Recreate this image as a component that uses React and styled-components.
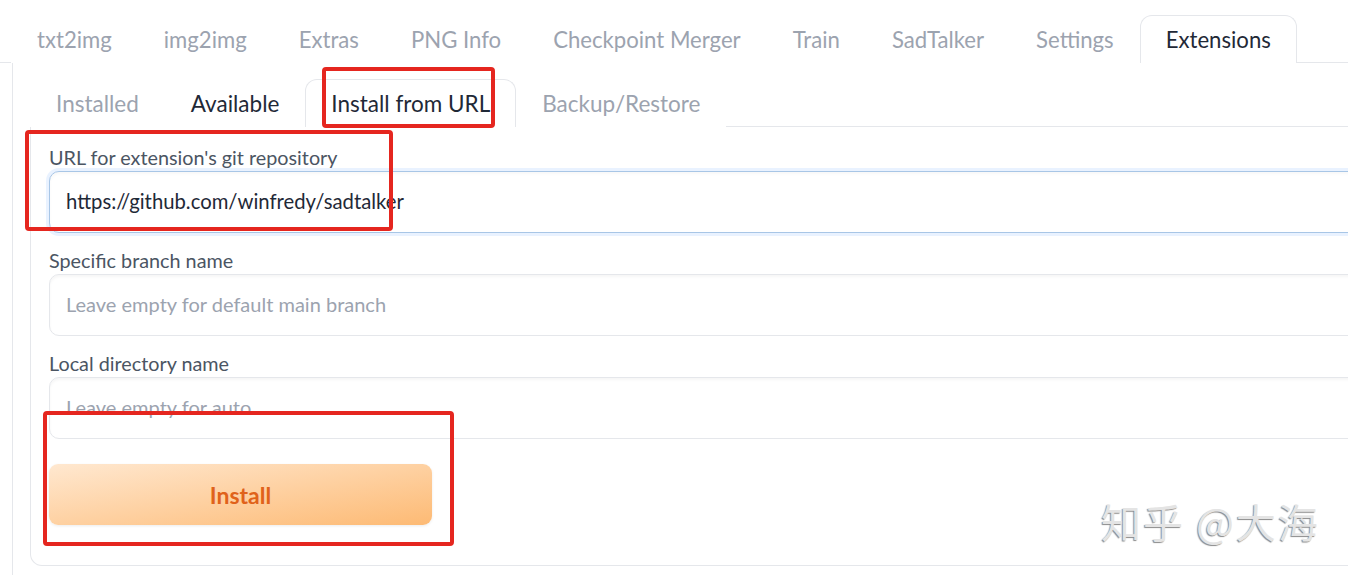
import React from "react";
import styled, { createGlobalStyle } from "styled-components";

const GlobalStyle = createGlobalStyle`
  html, body {
    margin: 0;
    padding: 0;
    background: #ffffff;
    overflow: hidden;
  }
  body {
    font-family: Lato, "Noto Sans", sans-serif;
  }
`;

const Page = styled.div`
  position: relative;
  width: 1348px;
  height: 575px;
  overflow: hidden;
  padding-top: 15px;
  box-sizing: border-box;
`;

const TabBar = styled.div`
  display: flex;
  padding-left: ${(p) => p.$inset}px;
  border-bottom: 1px solid #e5e7eb;
  width: 1500px;
`;

const Tab = styled.div`
  height: ${(p) => p.$h}px;
  box-sizing: border-box;
  padding: 0 25px;
  display: flex;
  align-items: center;
  font-size: ${(p) => p.$size}px;
  color: ${(p) => (p.$dark ? "#1f2937" : "#9ca3af")};
  border: 1px solid ${(p) => (p.$active ? "#e5e7eb" : "transparent")};
  border-bottom: none;
  border-radius: 12px 12px 0 0;
  background: #fff;
  margin-bottom: -1px;
  white-space: nowrap;
`;

const OuterPanel = styled.div`
  margin-left: 12px;
  width: 1500px;
  height: 520px;
  border-left: 1px solid #e5e7eb;
  padding: 16px 0 0 17px;
  box-sizing: border-box;
`;

const InnerPanel = styled.div`
  width: 1500px;
  height: 439px;
  border: 1px solid #e5e7eb;
  border-top: none;
  border-radius: 0 0 0 12px;
  padding: 18px 0 0 18px;
  box-sizing: border-box;
  display: flex;
  flex-direction: column;
  gap: 15px;
`;

const Field = styled.div`
  display: flex;
  flex-direction: column;
  gap: 2px;
`;

const Label = styled.div`
  font-size: 19.8px;
  line-height: 24px;
  color: #4b5563;
`;

const Input = styled.div`
  height: 62px;
  box-sizing: border-box;
  border: 1px solid ${(p) => (p.$focus ? "#a8c6e6" : "#e5e7eb")};
  border-radius: 10px;
  padding-left: 16px;
  padding-bottom: 2px;
  display: flex;
  align-items: center;
  font-size: ${(p) => (p.$placeholder ? 20 : 20.3)}px;
  color: ${(p) => (p.$placeholder ? "#9ca3af" : "#1f2937")};
  box-shadow: ${(p) =>
    p.$focus
      ? "0 0 0 3px rgba(191, 219, 254, 0.35), inset 0 2px 3px rgba(0,0,0,0.03)"
      : "inset 0 2px 3px rgba(0,0,0,0.04)"};
  background: #fff;
`;

const InstallButton = styled.button`
  margin-top: 10px;
  width: 383px;
  height: 61px;
  border: none;
  border-radius: 9px;
  background: linear-gradient(to bottom right, #ffe8d0, #fdba74);
  box-shadow: 0 1px 3px rgba(0, 0, 0, 0.08);
  color: #e0621a;
  font-family: Lato, "Noto Sans", sans-serif;
  font-weight: 700;
  font-size: 23px;
`;

const Marker = styled.div`
  position: absolute;
  border: 4px solid #e5261f;
  border-radius: 4px;
  box-sizing: border-box;
  pointer-events: none;
`;

const Watermark = styled.div`
  position: absolute;
  left: 1101px;
  top: 492px;
  font-family: "Noto Sans CJK SC", sans-serif;
  font-size: 40px;
  color: #e4e4e4;
  text-shadow: -1px 1px 1px #8a8a8a;
  white-space: nowrap;
  letter-spacing: 2px;
`;

const topTabs = ["txt2img", "img2img", "Extras", "PNG Info", "Checkpoint Merger", "Train", "SadTalker", "Settings", "Extensions"];
const innerTabs = ["Installed", "Available", "Install from URL", "Backup/Restore"];

export default function App() {
  return (
    <Page>
      <GlobalStyle />
      <TabBar $inset={11}>
        {topTabs.map((t) => (
          <Tab key={t} $h={48} $size={22.15} $active={t === "Extensions"} $dark={t === "Extensions"}>
            {t}
          </Tab>
        ))}
      </TabBar>
      <OuterPanel>
        <TabBar $inset={0}>
          {innerTabs.map((t) => (
            <Tab
              key={t}
              $h={48}
              $size={22.5}
              $active={t === "Install from URL"}
              $dark={t === "Install from URL" || t === "Available"}
            >
              {t}
            </Tab>
          ))}
        </TabBar>
        <InnerPanel>
          <Field>
            <Label>URL for extension's git repository</Label>
            <Input $focus>https://github.com/winfredy/sadtalker</Input>
          </Field>
          <Field>
            <Label>Specific branch name</Label>
            <Input $placeholder>Leave empty for default main branch</Input>
          </Field>
          <Field>
            <Label>Local directory name</Label>
            <Input $placeholder>Leave empty for auto</Input>
          </Field>
          <InstallButton>Install</InstallButton>
        </InnerPanel>
      </OuterPanel>
      <Marker style={{ left: 322, top: 67, width: 173, height: 61 }} />
      <Marker style={{ left: 25, top: 130, width: 368, height: 101 }} />
      <Marker style={{ left: 43, top: 411, width: 411, height: 135 }} />
      <Watermark>知乎 @大海</Watermark>
    </Page>
  );
}
